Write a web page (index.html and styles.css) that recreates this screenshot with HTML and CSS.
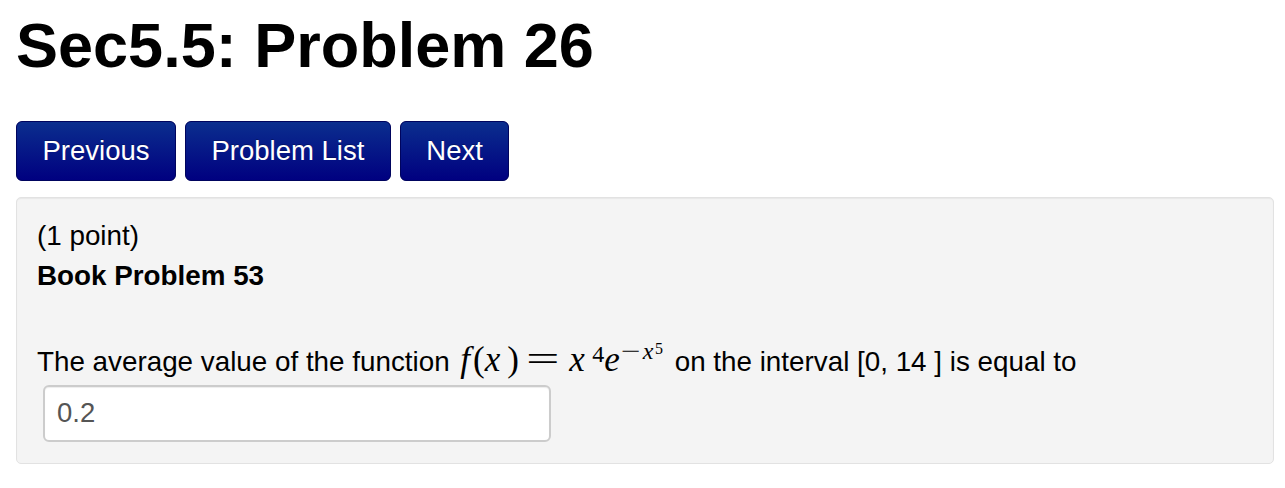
FILE: index.html
```html
<!DOCTYPE html>
<html lang="en">
<head>
    <meta charset="UTF-8">
    <title>Sec5.5: Problem 26</title>

    <link rel="stylesheet" href="styles.css">

</head>
<body>
  <div class="page">

    <h1 class="title">Sec5.5: Problem 26</h1>

    <div class="nav">
      <a class="btn" href="#">Previous</a>
      <a class="btn" href="#">Problem List</a>
      <a class="btn" href="#">Next</a>
    </div>

    <div class="problem">
      <div class="intro">
        (1 point)<br>
        <b>Book Problem 53</b>
      </div>

      <p class="question">The average value of the function
        <span class="math"><span class="mi f">f</span><span class="mo lp">(</span><span class="mi x1">x</span><span class="mo rp">)</span><span class="mo eq">=</span><span class="mi x2">x</span><span class="sup four">4</span><span class="mi e">e</span><span class="sup exp"><span class="mo minus">&minus;</span><span class="mi">x</span><span class="sup five">5</span></span></span>
        on the interval [0, 14 ] is equal to</p>

      <input class="answer" type="text" value="0.2">
    </div>

  </div>
</body>
</html>
```

FILE: styles.css
```css
body {
  margin: 0;
  font-family: "Liberation Sans", Arial, sans-serif;
  font-size: 27.8px;
  color: #000000;
  background: #ffffff;
}

.page {
  padding: 0 11px 0 16px;
}

.title {
  margin: 10px 0 0;
  font-size: 63px;
  line-height: 70px;
  font-weight: bold;
}

.nav {
  display: flex;
  gap: 9px;
  margin-top: 41px;
}

.btn {
  display: block;
  height: 60px;
  box-sizing: border-box;
  padding: 0 25.5px;
  border: 1px solid #00045e;
  border-radius: 6px;
  background: #000080 linear-gradient(to bottom, #0b2e8e 0%, #000080 100%);
  color: #ffffff;
  font-size: 27.5px;
  line-height: 58px;
  text-decoration: none;
  text-shadow: 0 -1px 0 rgba(0, 0, 0, 0.25);
}

.problem {
  margin-top: 16px;
  padding: 18px 20px 21px;
  border: 1px solid #e2e2e2;
  border-radius: 5px;
  background: #f4f4f4;
  box-shadow: inset 0 1px 1px rgba(0, 0, 0, 0.05);
}

.intro {
  line-height: 40px;
}

.question {
  margin: 46px 0 0;
  line-height: 40px;
}

/* hand made TeX-ish formula */
.math {
  font-family: "Liberation Serif", "Times New Roman", serif;
  font-size: 35px;
  line-height: 0;
  margin-right: 4px;
}

.mi {
  font-style: italic;
}

.f {
  margin-left: 3px;
  margin-right: 3px;
}

.x1 {
  margin-right: 7px;
}

.eq {
  display: inline-block;
  transform: scaleX(1.7);
  margin: 0 16px 0 14.5px;
}

.sup {
  font-size: 24px;
}

.four {
  vertical-align: 9px;
  margin-left: 7.5px;
}

.exp {
  vertical-align: 12px;
}

.minus {
  display: inline-block;
  transform: scaleX(1.45);
  margin: 0 5px 0 4.5px;
}

.five {
  font-size: 16px;
  vertical-align: 5px;
  margin-left: 1.5px;
}

.answer {
  display: block;
  width: 508px;
  height: 57px;
  box-sizing: border-box;
  margin: 2.5px 0 0 6px;
  padding: 0 12px;
  border: 2px solid #cccccc;
  border-radius: 6px;
  background: #ffffff;
  color: #555555;
  font-family: inherit;
  font-size: 27.5px;
  box-shadow: inset 0 1px 1px rgba(0, 0, 0, 0.075);
}
```
